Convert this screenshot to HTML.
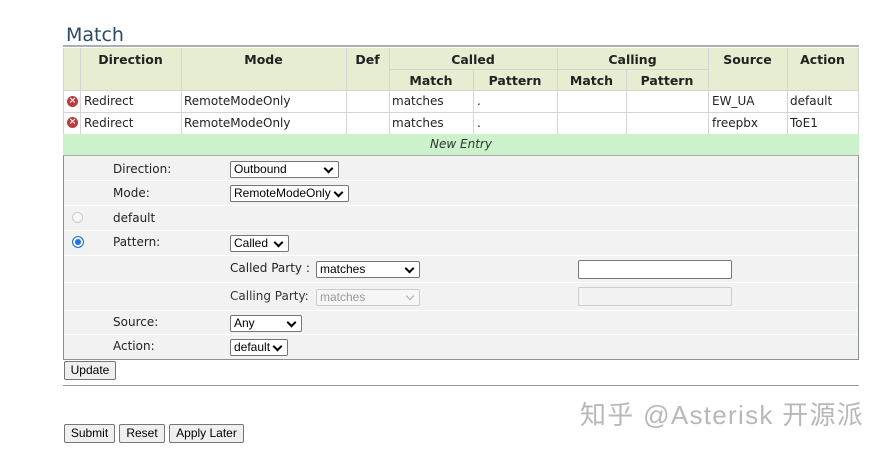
<!DOCTYPE html>
<html><head><meta charset="utf-8"><style>
*{box-sizing:border-box;margin:0;padding:0}
body{width:896px;height:451px;background:#fff;position:relative;overflow:hidden;font-family:"DejaVu Sans",Verdana,sans-serif;font-size:12px;color:#222}
.a{position:absolute}
.h{background:#e6edd1;font-weight:bold;text-align:center;font-size:12.5px;color:#222}
.vl{position:absolute;width:1px;background:#d4d4d4}
.hl{position:absolute;height:1px;background:#d4d4d4}
.sel{position:absolute;height:17px;border:1px solid #767676;border-radius:2px;background:#fff;font-family:"Liberation Sans",Arial,sans-serif;font-size:12px;padding:0 0 0 3px;line-height:15px;color:#000}
.sel:after{content:"";position:absolute;right:6px;top:3px;width:5px;height:5px;border-right:2px solid #000;border-bottom:2px solid #000;transform:rotate(45deg)}
.sel.d{border-color:#ccc;color:#999;background:#f6f6f6}
.sel.d:after{border-color:#aaa;border-width:1px}
.btn{position:absolute;height:19px;border:1px solid #767676;border-radius:2px;background:#efefef;font-family:"Liberation Sans",Arial,sans-serif;font-size:12px;line-height:17px;text-align:center;color:#000}
.x{position:absolute;width:11px;height:11px;border-radius:50%;background:#c0393b;color:#fff;font-size:9px;line-height:11px;text-align:center;font-weight:bold}
.lab{position:absolute;left:113px}
</style></head><body>
<div class="a" style="left:66px;top:24px;font-size:19px;color:#2a4a68">Match</div>
<div class="a" style="left:63px;top:45px;width:796px;height:2px;background:#a8b0b0"></div>
<div class="a h" style="left:63px;top:48px;width:796px;height:42px"></div>
<div class="a h" style="left:80px;top:52px;width:101px">Direction</div>
<div class="a h" style="left:181px;top:52px;width:165px">Mode</div>
<div class="a h" style="left:346px;top:52px;width:43px">Def</div>
<div class="a h" style="left:389px;top:52px;width:168px">Called</div>
<div class="a h" style="left:557px;top:52px;width:151px">Calling</div>
<div class="a h" style="left:708px;top:52px;width:79px">Source</div>
<div class="a h" style="left:787px;top:52px;width:71px">Action</div>
<div class="a h" style="left:389px;top:73px;width:84px">Match</div>
<div class="a h" style="left:473px;top:73px;width:84px">Pattern</div>
<div class="a h" style="left:557px;top:73px;width:69px">Match</div>
<div class="a h" style="left:626px;top:73px;width:82px">Pattern</div>
<div class="hl" style="left:389px;top:69px;width:319px"></div>
<div class="hl" style="left:63px;top:90px;width:796px"></div>
<div class="hl" style="left:63px;top:112px;width:796px"></div>
<div class="vl" style="left:63px;top:48px;height:86px"></div>
<div class="vl" style="left:80px;top:48px;height:86px"></div>
<div class="vl" style="left:181px;top:48px;height:86px"></div>
<div class="vl" style="left:346px;top:48px;height:86px"></div>
<div class="vl" style="left:389px;top:48px;height:86px"></div>
<div class="vl" style="left:473px;top:70px;height:64px"></div>
<div class="vl" style="left:557px;top:48px;height:86px"></div>
<div class="vl" style="left:626px;top:70px;height:64px"></div>
<div class="vl" style="left:708px;top:48px;height:86px"></div>
<div class="vl" style="left:787px;top:48px;height:86px"></div>
<div class="vl" style="left:858px;top:48px;height:86px"></div>
<div class="x" style="left:67px;top:96px">×</div>
<div class="a" style="left:84px;top:94px">Redirect</div>
<div class="a" style="left:184px;top:94px">RemoteModeOnly</div>
<div class="a" style="left:392px;top:94px">matches</div>
<div class="a" style="left:477px;top:94px">.</div>
<div class="a" style="left:712px;top:94px">EW_UA</div>
<div class="a" style="left:790px;top:94px">default</div>
<div class="x" style="left:67px;top:117px">×</div>
<div class="a" style="left:84px;top:116px">Redirect</div>
<div class="a" style="left:184px;top:116px">RemoteModeOnly</div>
<div class="a" style="left:392px;top:116px">matches</div>
<div class="a" style="left:477px;top:116px">.</div>
<div class="a" style="left:712px;top:116px">freepbx</div>
<div class="a" style="left:790px;top:116px">ToE1</div>
<div class="a" style="left:63px;top:134px;width:796px;height:22px;background:#ccf2cc;border-bottom:1px solid #aaa;text-align:center;font-style:italic;line-height:20px;color:#333">New Entry</div>
<div class="a" style="left:63px;top:156px;width:796px;height:204px;background:#f2f2f2;border:1px solid #8a9098;border-top:none"></div>
<div class="a" style="left:64px;top:180px;width:794px;height:1px;background:#fff"></div>
<div class="a" style="left:64px;top:205px;width:794px;height:1px;background:#fff"></div>
<div class="a" style="left:64px;top:230px;width:794px;height:1px;background:#fff"></div>
<div class="a" style="left:64px;top:255px;width:794px;height:1px;background:#fff"></div>
<div class="a" style="left:64px;top:282px;width:794px;height:1px;background:#fff"></div>
<div class="a" style="left:64px;top:310px;width:794px;height:1px;background:#fff"></div>
<div class="a" style="left:64px;top:334px;width:794px;height:1px;background:#fff"></div>
<div class="lab" style="top:162px">Direction:</div>
<div class="sel" style="left:230px;top:161px;width:109px">Outbound</div>
<div class="lab" style="top:186px">Mode:</div>
<div class="sel" style="left:230px;top:185px;width:119px">RemoteModeOnly</div>
<div class="a" style="left:72px;top:212px;width:11px;height:11px;border:1px solid #ccc;border-radius:50%;background:#f8f8f8"></div>
<div class="lab" style="top:211px">default</div>
<div class="a" style="left:72px;top:236px;width:12px;height:12px;border-radius:50%;background:#1a73e8;border:1px solid #1a73e8;box-shadow:inset 0 0 0 2px #fff"></div>
<div class="lab" style="top:235px">Pattern:</div>
<div class="sel" style="left:230px;top:235px;width:59px">Called</div>
<div class="a" style="left:230px;top:261px">Called Party :</div>
<div class="sel" style="left:316px;top:261px;width:104px">matches</div>
<div class="a" style="left:578px;top:260px;width:154px;height:19px;border:1px solid #767676;border-radius:2px;background:#fff"></div>
<div class="a" style="left:230px;top:289px;color:#333">Calling Party:</div>
<div class="sel d" style="left:316px;top:289px;width:104px">matches</div>
<div class="a" style="left:578px;top:287px;width:154px;height:19px;border:1px solid #ccc;border-radius:2px;background:#f2f2f2"></div>
<div class="lab" style="top:315px">Source:</div>
<div class="sel" style="left:230px;top:315px;width:72px">Any</div>
<div class="lab" style="top:339px">Action:</div>
<div class="sel" style="left:230px;top:339px;width:58px">default</div>
<div class="btn" style="left:64px;top:361px;width:52px">Update</div>
<div class="a" style="left:63px;top:385px;width:796px;height:1px;background:#999"></div>
<div class="a" style="left:580px;top:395px;font-family:'Liberation Sans','Noto Sans CJK SC',sans-serif;font-size:26px;letter-spacing:1.3px;color:#b8b8b8;white-space:nowrap">知乎 @Asterisk 开源派</div>
<div class="btn" style="left:64px;top:424px;width:51px">Submit</div>
<div class="btn" style="left:119px;top:424px;width:46px">Reset</div>
<div class="btn" style="left:169px;top:424px;width:75px">Apply Later</div>
</body></html>
